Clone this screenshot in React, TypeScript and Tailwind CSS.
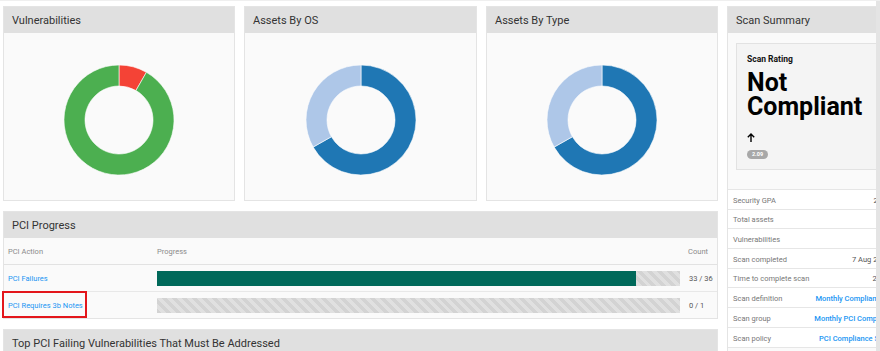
import React from "react";

function pt(cx: number, cy: number, rad: number, a: number) {
  const t = (a * Math.PI) / 180;
  return [cx + rad * Math.sin(t), cy - rad * Math.cos(t)];
}
function arc(cx: number, cy: number, R: number, r: number, a0: number, a1: number) {
  const large = a1 - a0 > 180 ? 1 : 0;
  const [x0, y0] = pt(cx, cy, R, a0);
  const [x1, y1] = pt(cx, cy, R, a1);
  const [x2, y2] = pt(cx, cy, r, a1);
  const [x3, y3] = pt(cx, cy, r, a0);
  return `M${x0} ${y0} A${R} ${R} 0 ${large} 1 ${x1} ${y1} L${x2} ${y2} A${r} ${r} 0 ${large} 0 ${x3} ${y3} Z`;
}

function Donut({ slices }: { slices: { v: number; c: string }[] }) {
  const total = slices.reduce((s, x) => s + x.v, 0);
  let a = 0;
  return (
    <svg width="110" height="110" viewBox="0 0 110 110">
      {slices.map((s, i) => {
        const a0 = a;
        const a1 = a + (s.v / total) * 360;
        a = a1;
        return <path key={i} d={arc(55, 55, 55, 34, a0, a1)} fill={s.c} stroke="#ffffff" strokeWidth="0.6" />;
      })}
    </svg>
  );
}

function Header({ title }: { title: string }) {
  return (
    <div className="h-[26px] bg-[#e0e0e0] flex items-center pl-[8px] pt-[3px] text-[11px] text-[#333] shrink-0">
      {title}
    </div>
  );
}

function ChartPanel({ title, slices }: { title: string; slices: { v: number; c: string }[] }) {
  return (
    <div className="border border-[#e4e4e4] bg-[#fafafa] flex flex-col">
      <Header title={title} />
      <div className="flex justify-center pt-[32px] pb-[25px]">
        <Donut slices={slices} />
      </div>
    </div>
  );
}

const stripes =
  "bg-[repeating-linear-gradient(45deg,#d3d3d3_0px,#d3d3d3_3.5px,#e0e0e0_3.5px,#e0e0e0_7px)]";

const rows = [
  { label: "Security GPA", value: "2.09", link: false, pr: "pr-[71px]" },
  { label: "Total assets", value: "36", link: false, pr: "pr-[68px]" },
  { label: "Vulnerabilities", value: "33", link: false, pr: "pr-[68px]" },
  { label: "Scan completed", value: "7 Aug 2019", link: false, pr: "pr-[69px]" },
  { label: "Time to complete scan", value: "2 min", link: false, pr: "pr-[68px]" },
  { label: "Scan definition", value: "Monthly Compliance Scan", link: true, pr: "pr-[56px]" },
  { label: "Scan group", value: "Monthly PCI Compliance", link: true, pr: "pr-[62px]" },
  { label: "Scan policy", value: "PCI Compliance Scans", link: true, pr: "pr-[64px]" },
];

export default function App() {
  return (
    <div
      className="w-[880px] h-[351px] overflow-hidden bg-white relative border-t border-[#efefef]"
      style={{ fontFamily: "Roboto, 'Noto Sans', Arial, sans-serif" }}
    >
      <div className="flex gap-[9px] pl-[3px] pt-[5px]">
        <div className="w-[715px] shrink-0 flex flex-col">
          <div className="grid grid-cols-[232px_233px_232px] gap-[9px]">
            <ChartPanel
              title="Vulnerabilities"
              slices={[
                { v: 8.3, c: "#f44336" },
                { v: 91.7, c: "#4caf50" },
              ]}
            />
            <ChartPanel
              title="Assets By OS"
              slices={[
                { v: 66.8, c: "#1f77b4" },
                { v: 33.2, c: "#aec7e8" },
              ]}
            />
            <ChartPanel
              title="Assets By Type"
              slices={[
                { v: 66.8, c: "#1f77b4" },
                { v: 33.2, c: "#aec7e8" },
              ]}
            />
          </div>

          <div className="mt-[10px] border border-[#e4e4e4] bg-[#fafafa] flex flex-col">
            <Header title="PCI Progress" />
            <div className="h-[27px] pt-[2px] flex items-center border-b border-[#e2e2e2] text-[7.5px] text-[#8a8a8a]">
              <div className="w-[153px] pl-[4px]">PCI Action</div>
              <div className="flex-1">Progress</div>
              <div className="pr-[9px]">Count</div>
            </div>
            <div className="h-[27px] flex items-center border-b border-[#e8e8e8] text-[7.5px]">
              <div className="w-[153px] pl-[4px] pt-[2px] text-[#2196f3]">PCI Failures</div>
              <div className={`w-[523px] h-[15px] ${stripes}`}>
                <div className="h-full bg-[#00695a]" style={{ width: `${(33 / 36) * 100}%` }} />
              </div>
              <div className="pl-[9px] pt-[2px] text-[#555]">33 / 36</div>
            </div>
            <div className="h-[26px] flex items-center text-[7.5px] relative">
              <div className="w-[153px] pl-[4px] pt-[2px] text-[#2196f3]">PCI Requires 3b Notes</div>
              <div className={`w-[523px] h-[15px] ${stripes}`} />
              <div className="pl-[9px] pt-[2px] text-[#555]">0 / 1</div>
              <div className="absolute left-[-2px] top-[-1px] w-[85px] h-[27px] border-[2.5px] border-[#e3161b]" />
            </div>
          </div>

          <div className="mt-[10px] border border-[#e4e4e4] bg-[#fafafa] flex flex-col">
            <Header title="Top PCI Failing Vulnerabilities That Must Be Addressed" />
          </div>
        </div>

        <div className="w-[233px] shrink-0 border border-[#e4e4e4] bg-[#fafafa] flex flex-col">
          <Header title="Scan Summary" />
          <div className="mt-[10px] ml-[8px] h-[127px] bg-[#f4f4f4] border border-[#e2e2e2] pl-[10px] pt-[9px] flex flex-col items-start">
            <div className="text-[8.5px] font-bold text-[#111] leading-[12px]">Scan Rating</div>
            <div className="text-[25px] font-bold text-black leading-[24px] mt-[6px]">
              Not
              <br />
              Compliant
            </div>
            <svg className="mt-[14px]" width="8" height="9" viewBox="0 0 8 9">
              <path d="M4 9 V1.2 M0.8 4.3 L4 1.1 L7.2 4.3" stroke="#000" strokeWidth="1.4" fill="none" />
            </svg>
            <div className="mt-[8px] inline-flex items-center justify-center h-[9px] w-[21px] rounded-full bg-[#a8a8a8] text-white text-[5.5px] font-bold">
              2.09
            </div>
          </div>
          <div className="h-[19px] bg-[#fafafa] shrink-0" />
          <div className="bg-white border-t border-[#e6e6e6]">
            {rows.map((r) => (
              <div
                key={r.label}
                className={`h-[19.7px] pt-[2px] flex items-center justify-between border-b border-[#e6e6e6] pl-[5px] ${r.pr} text-[7.5px] whitespace-nowrap`}
              >
                <span className="text-[#777]">{r.label}</span>
                <span className={r.link ? "text-[#2196f3] font-medium" : "text-[#555]"}>{r.value}</span>
              </div>
            ))}
          </div>
        </div>
      </div>
      <div className="absolute right-0 top-0 w-[4px] h-full bg-[#e4e4e4]" />
    </div>
  );
}
